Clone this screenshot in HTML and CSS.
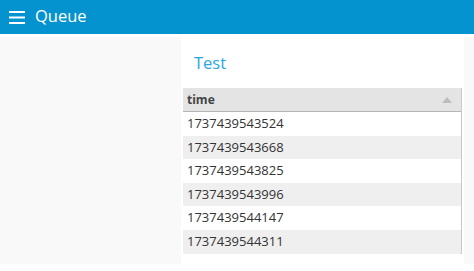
FILE: index.html
```html
<!DOCTYPE html>
<html lang="en">
<head>
	<meta charset="UTF-8">
	<title>Queue</title>
	<link rel="stylesheet" href="styles.css">
</head>
<body>
	<div class="topbar">
		<svg class="menu" width="16" height="13" viewBox="0 0 16 13">
			<rect x="0" y="0" width="16" height="2" fill="#fff"/>
			<rect x="0" y="5.5" width="16" height="2" fill="#fff"/>
			<rect x="0" y="11" width="16" height="2" fill="#fff"/>
		</svg>
		<span class="brand">Queue</span>
	</div>
	<div class="main">
		<div class="side"></div>
		<div class="panel">
			<h2 class="title">Test</h2>
			<div class="grid">
				<div class="head">
					<span>time</span>
					<i class="sort"></i>
				</div>
				<div class="row">1737439543524</div>
				<div class="row odd">1737439543668</div>
				<div class="row">1737439543825</div>
				<div class="row odd">1737439543996</div>
				<div class="row">1737439544147</div>
				<div class="row odd">1737439544311</div>
			</div>
		</div>
		<div class="rest"></div>
	</div>
</body>
</html>
```

FILE: styles.css
```css
* {
	padding:0; margin:0;
	box-sizing:border-box;
}
html,body {
	height:100%;
}
body {
	background:#fff;
	font-family:"Open Sans","Noto Sans",sans-serif;
	color:#333;
	overflow:hidden;
}
.topbar {
	height:34px;
	background:#0593cf;
	display:flex;
	align-items:center;
	padding-left:9px;
	gap:10px;
}
.brand {
	color:#fff;
	font-size:16.5px;
	line-height:1;
	margin-top:-2px;
}
.main {
	display:flex;
	padding-top:3px;
	height:230px;
}
.side {
	width:181px;
	background:#f9f9f9;
}
.panel {
	width:280px;
	margin-left:2px;
	background:#fff;
}
.rest {
	flex:1;
	margin-left:1px;
	background:#f9f9f9;
}
.title {
	font-weight:normal;
	font-size:16.5px;
	color:#27a6e0;
	padding:14px 0 0 11px;
	height:51px;
}
.grid {
	border-right:1px solid #c9c9c9;
	width:279px;
}
.head {
	height:24px;
	background:#e4e4e4;
	border-bottom:1px solid #b5b5b5;
	display:flex;
	align-items:center;
	justify-content:space-between;
	padding:0 9px 0 4px;
	font-size:12px;
	font-weight:bold;
	color:#444;
}
.sort {
	width:0; height:0;
	border-left:5px solid transparent;
	border-right:5px solid transparent;
	border-bottom:6px solid #bdbdbd;
}
.row {
	height:23.6px;
	line-height:23.6px;
	padding-left:4px;
	font-size:13px;
	color:#333;
}
.odd {
	background:#efefef;
}
```
